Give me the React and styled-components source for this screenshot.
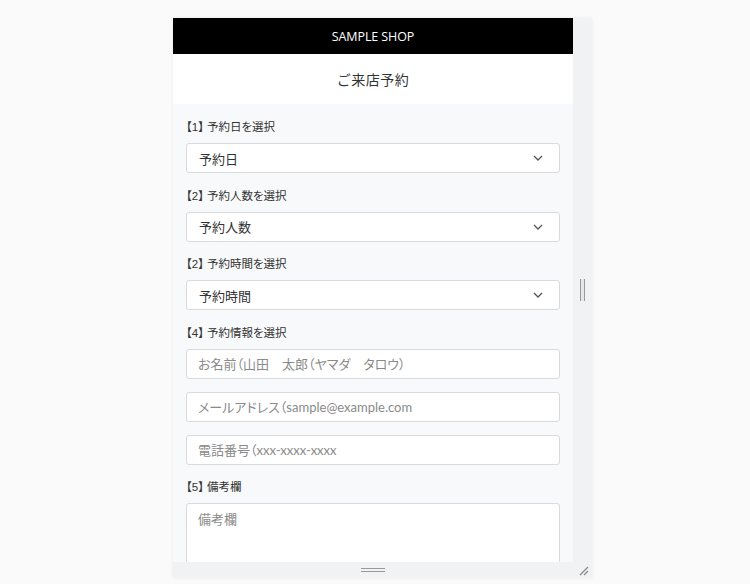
import React from "react";
import styled, { createGlobalStyle } from "styled-components";

const Global = createGlobalStyle`
  html, body { margin: 0; padding: 0; background: #fafafa; }
  body { font-family: "Open Sans", "Noto Sans CJK JP", sans-serif; }
  * { box-sizing: border-box; }
`;

const Stage = styled.div`
  padding: 18px 0 0 173px;
  width: 750px;
  height: 584px;
  overflow: hidden;
`;

const Frame = styled.div`
  display: grid;
  grid-template-columns: 400px 19px;
  grid-template-rows: 544px 16px;
  width: 419px;
  background: #f1f2f4;
  box-shadow: 0 0 4px rgba(0, 0, 0, 0.06);
`;

const Viewport = styled.div`
  overflow: hidden;
  background: #f8f9fa;
`;

const Gutter = styled.div`
  display: flex;
  align-items: center;
  justify-content: center;
  background: #f1f2f4;
`;

const VHandle = styled.div`
  width: 5px;
  height: 22px;
  border-left: 1px solid #9a9a9a;
  border-right: 1px solid #9a9a9a;
  background: #e6e6e6;
`;

const BottomBar = styled.div`
  grid-column: 1 / 3;
  display: grid;
  grid-template-columns: 400px 19px;
  background: #f1f2f4;
`;

const BottomCenter = styled.div`
  display: flex;
  align-items: center;
  justify-content: center;
`;

const HHandle = styled.div`
  width: 24px;
  height: 4px;
  border-top: 1px solid #9a9a9a;
  border-bottom: 1px solid #9a9a9a;
`;

const Corner = styled.div`
  display: flex;
  align-items: center;
  justify-content: center;
`;

const Header = styled.header`
  height: 36px;
  background: #000;
  color: #fff;
  display: flex;
  align-items: center;
  justify-content: center;
  font-family: "Open Sans", sans-serif;
  font-size: 12.5px;
  letter-spacing: -0.1px;
`;

const TitleBar = styled.div`
  height: 50px;
  background: #fff;
  display: flex;
  align-items: center;
  justify-content: center;
  font-family: "Noto Sans CJK JP", sans-serif;
  font-size: 14px;
  letter-spacing: 0.5px;
  color: #333;
`;

const Form = styled.div`
  padding: 13px 13px 0;
  display: flex;
  flex-direction: column;
`;

const Label = styled.div`
  height: 20px;
  line-height: 20px;
  margin: ${(p) => (p.$first ? "0" : "12.5px")} 0 6px;
  font-family: "Liberation Sans", "Noto Sans CJK JP", sans-serif;
  font-feature-settings: "palt";
  font-size: 11.5px;
  color: #333;
`;

const Bracket = styled.span`
  margin-right: 3px;
`;

const Box = styled.div`
  height: ${(p) => p.$h || 30}px;
  background: #fff;
  border: 1px solid #d9dadc;
  border-radius: 3px;
  display: flex;
  align-items: ${(p) => (p.$top ? "flex-start" : "center")};
  justify-content: space-between;
  padding: ${(p) => (p.$top ? "5px 11px" : "0 11px")};
  margin-top: ${(p) => (p.$stack ? 13 : 0)}px;
  font-family: "Lato", "Noto Sans CJK JP", sans-serif;
  font-feature-settings: "palt";
  font-size: 13px;
  color: ${(p) => (p.$ph ? "#8a8a8a" : "#333")};
  white-space: nowrap;
`;

const SelectText = styled.span`
  padding-left: 1px;
  font-feature-settings: normal;
`;

const Chevron = () => (
  <svg width="10" height="6" viewBox="0 0 10 6" style={{ marginRight: 5 }}>
    <path d="M1 1l4 4 4-4" fill="none" stroke="#555" strokeWidth="1.3" />
  </svg>
);

const Grip = () => (
  <svg width="12" height="12" viewBox="0 0 12 12">
    <path d="M11 3L3 11M11 7L7 11" stroke="#8a8a8a" strokeWidth="1.2" />
  </svg>
);

const Select = ({ children }) => (
  <Box>
    <SelectText>{children}</SelectText>
    <Chevron />
  </Box>
);

const Num = ({ n }) => <Bracket>【{n}】</Bracket>;

export default function App() {
  return (
    <>
      <Global />
      <Stage>
        <Frame>
          <Viewport>
            <Header>SAMPLE SHOP</Header>
            <TitleBar>ご来店予約</TitleBar>
            <Form>
              <Label $first><Num n="1" />予約日を選択</Label>
              <Select>予約日</Select>
              <Label><Num n="2" />予約人数を選択</Label>
              <Select>予約人数</Select>
              <Label><Num n="2" />予約時間を選択</Label>
              <Select>予約時間</Select>
              <Label><Num n="4" />予約情報を選択</Label>
              <Box $ph>お名前（山田　太郎（ヤマダ　タロウ）</Box>
              <Box $ph $stack>メールアドレス（sample@example.com</Box>
              <Box $ph $stack>電話番号（xxx-xxxx-xxxx</Box>
              <Label><Num n="5" />備考欄</Label>
              <Box $ph $top $h={90}>備考欄</Box>
            </Form>
          </Viewport>
          <Gutter>
            <VHandle />
          </Gutter>
          <BottomBar>
            <BottomCenter>
              <HHandle />
            </BottomCenter>
            <Corner>
              <Grip />
            </Corner>
          </BottomBar>
        </Frame>
      </Stage>
    </>
  );
}
